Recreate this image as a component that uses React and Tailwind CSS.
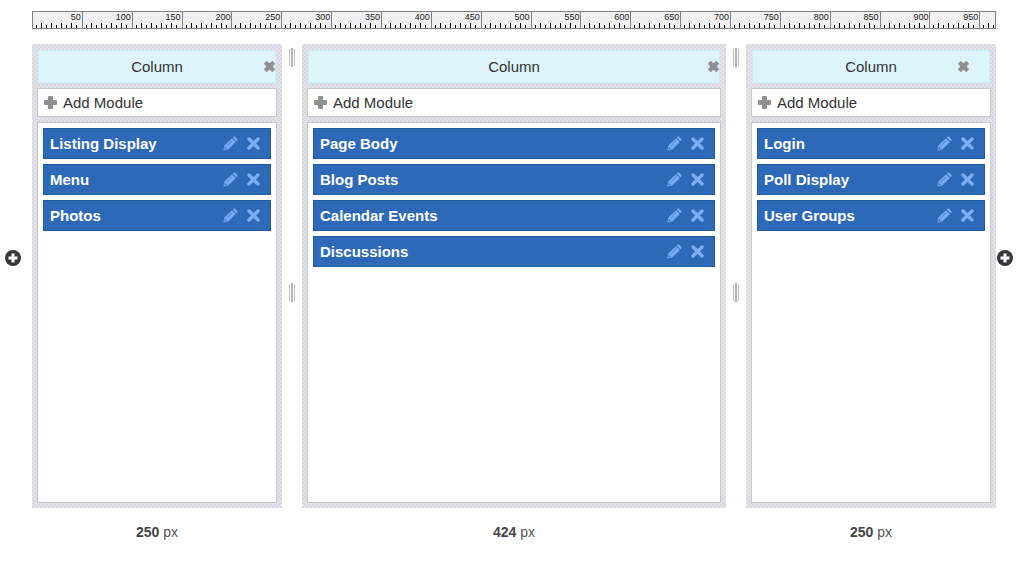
import React, { Fragment } from "react";

const COLUMNS = [
  {
    width: 250,
    frame: "w-[250px] shrink-0",
    closeInset: "pr-0",
    modules: ["Listing Display", "Menu", "Photos"],
  },
  {
    width: 424,
    frame: "min-w-0 flex-1",
    closeInset: "pr-0",
    modules: ["Page Body", "Blog Posts", "Calendar Events", "Discussions"],
  },
  {
    width: 250,
    frame: "w-[250px] shrink-0",
    closeInset: "pr-5",
    modules: ["Login", "Poll Display", "User Groups"],
  },
];

const MARKS = Array.from({ length: 19 }, (_, i) => (i + 1) * 50);

function Ticks({ count }) {
  return (
    <svg width={count * 5} height="6" className="block" shapeRendering="crispEdges" aria-hidden="true">
      {Array.from({ length: count }, (_, i) => (
        <rect key={i} x={i * 5 + 3} y={i % 2 ? 1 : 3} width="1" height={i % 2 ? 5 : 3} fill="#000" />
      ))}
    </svg>
  );
}

function Ruler() {
  return (
    <div className="flex h-[18px] overflow-hidden border border-[#808080] bg-[#f0f0f0] text-[9px] leading-[10px] text-[#222]">
      {MARKS.map((mark) => (
        <div
          key={mark}
          className="flex min-w-0 flex-[50_1_0px] flex-col justify-between overflow-hidden border-r border-[#808080]"
        >
          <span className="pr-px text-right">{mark}</span>
          <Ticks count={9} />
        </div>
      ))}
      <div className="flex min-w-0 flex-[15_1_0px] flex-col justify-end overflow-hidden">
        <Ticks count={3} />
      </div>
    </div>
  );
}

function PlusIcon() {
  return (
    <svg width="13" height="13" viewBox="0 0 13 13" fill="#909090" aria-hidden="true">
      <path d="M5 0h3q1 0 1 1v3h3q1 0 1 1v3q0 1-1 1H9v3q0 1-1 1H5q-1 0-1-1V9H1Q0 9 0 8V5q0-1 1-1h3V1q0-1 1-1z" />
    </svg>
  );
}

function HeavyCrossIcon() {
  return (
    <svg width="11" height="11" viewBox="0 0 11 11" fill="#909090" aria-hidden="true">
      <path d="M2.2.3q.6-.5 1.2 0l.9 1.4h2.4L7.6.3q.6-.5 1.2 0l1.9 1.9q.5.6 0 1.2L9.3 4.3v2.4l1.4.9q.5.6 0 1.2l-1.9 1.9q-.6.5-1.2 0l-.9-1.4H4.3l-.9 1.4q-.6.5-1.2 0L.3 8.8q-.5-.6 0-1.2l1.4-.9V4.3L.3 3.4q-.5-.6 0-1.2z" />
    </svg>
  );
}

function CrossIcon() {
  return (
    <svg width="13" height="13" viewBox="0 0 13 13" aria-hidden="true">
      <path d="M2 2l9 9M11 2l-9 9" stroke="#7aadf3" strokeWidth="3.5" strokeLinecap="round" />
    </svg>
  );
}

function PencilIcon() {
  return (
    <svg width="15" height="15" viewBox="0 0 15 15" aria-hidden="true">
      <path d="M.4 14.4l1-4.8L9 2.2l3.9 3.7-7.6 7.6z" fill="#76aaf1" />
      <path d="M9.7 1.6l.9-.9q.8-.7 1.5 0l2.2 2.2q.7.8 0 1.5l-.9.9z" fill="#7aadf3" />
      <path d="M4 9.8l5-5" stroke="#4580d0" strokeWidth="0.9" />
      <path d="M2.3 10.4l.3 2 2 .3-2.2.8-.9-.8z" fill="#2e69b8" />
    </svg>
  );
}

function AddColumnButton({ label }) {
  return (
    <button type="button" aria-label={label} className="block">
      <svg width="16" height="16" viewBox="0 0 16 16" aria-hidden="true">
        <circle cx="8" cy="8" r="8" fill="#35393a" />
        <path d="M8 3.5v9M3.5 8h9" stroke="#fff" strokeWidth="3" />
      </svg>
    </button>
  );
}

function Grip() {
  return (
    <div role="separator" aria-orientation="vertical" className="flex h-[19px] cursor-col-resize items-center gap-px">
      <span className="h-[17px] w-px bg-[#bdbdbd]" />
      <span className="h-full w-0.5 bg-[#b5b5b5]" />
      <span className="h-[17px] w-px bg-[#bdbdbd]" />
    </div>
  );
}

function Module({ name }) {
  return (
    <li className="flex h-[31px] items-center border border-[#1f5c9f] bg-[#2e69b8] pr-2.5 pl-1.5">
      <span className="min-w-0 flex-1 truncate font-bold text-white">{name}</span>
      <button type="button" aria-label={`Edit ${name}`} className="mr-[9px] block">
        <PencilIcon />
      </button>
      <button type="button" aria-label={`Remove ${name}`} className="block">
        <CrossIcon />
      </button>
    </li>
  );
}

function Column({ column }) {
  return (
    <section className={`${column.frame} flex flex-col`}>
      <div className="flex flex-col gap-[5px] bg-[#e1e4ea] bg-[repeating-conic-gradient(#d6d9e0_0_25%,#e2e4ea_0_50%)] bg-[length:4px_4px] p-[5px]">
        <header className="mx-px mt-px grid h-[33px] grid-cols-[1fr_auto_1fr] items-center border border-[#c8effc] bg-[#dcf4fa]">
          <h2 className="col-start-2">Column</h2>
          <div className={`${column.closeInset} flex justify-end`}>
            <button type="button" aria-label="Remove column" className="block">
              <HeavyCrossIcon />
            </button>
          </div>
        </header>
        <button
          type="button"
          className="flex h-[29px] items-center gap-1.5 border border-[#c8c8c8] bg-white pl-1.5 text-left"
        >
          <PlusIcon />
          Add Module
        </button>
        <ul className="flex min-h-[381px] flex-col gap-[5px] border border-[#c8c8c8] bg-white p-[5px]">
          {column.modules.map((name) => (
            <Module key={name} name={name} />
          ))}
        </ul>
      </div>
      <p className="mt-4 text-center text-sm leading-4 text-[#555]">
        <b className="text-[#444]">{column.width}</b> px
      </p>
    </section>
  );
}

export default function App() {
  return (
    <main className="bg-white pt-[11px] pb-5 font-['Liberation_Sans',Arial,sans-serif] text-[15px] leading-5 text-[#333]">
      <div className="pr-7 pl-8">
        <Ruler />
      </div>
      <div className="mt-[15px] flex items-start">
        <div className="flex w-8 shrink-0 pt-[206px] pl-[5px]">
          <AddColumnButton label="Add column on the left" />
        </div>
        {COLUMNS.map((column, i) => (
          <Fragment key={i}>
            {i > 0 && (
              <div className="flex w-5 shrink-0 flex-col items-center gap-[216px] pt-1">
                <Grip />
                <Grip />
              </div>
            )}
            <Column column={column} />
          </Fragment>
        ))}
        <div className="flex w-7 shrink-0 pt-[206px] pl-px">
          <AddColumnButton label="Add column on the right" />
        </div>
      </div>
    </main>
  );
}
